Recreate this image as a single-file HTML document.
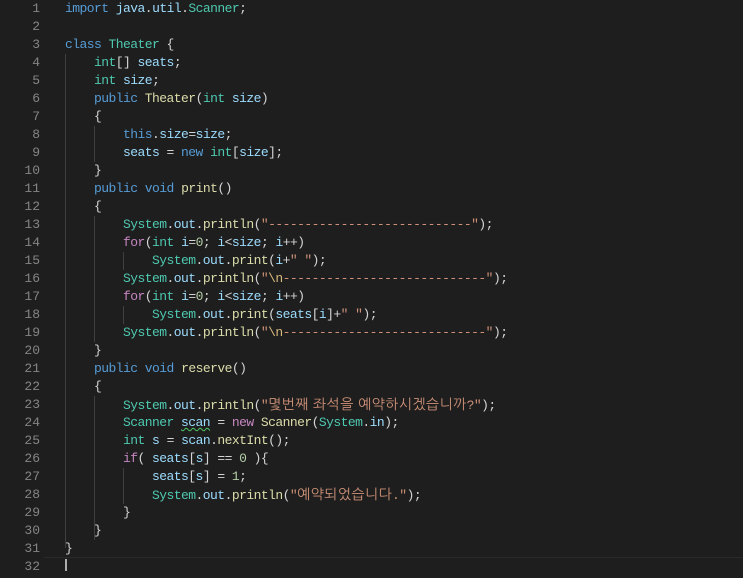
<!DOCTYPE html>
<html><head><meta charset="utf-8"><style>
html,body{margin:0;padding:0;background:#1e1e1e;width:743px;height:567px;overflow:hidden}
.ed{position:absolute;left:0;top:0px;font-family:"Liberation Mono","NanumGothic","Noto Sans CJK KR",monospace;font-size:13px;letter-spacing:-0.55px;line-height:18px;color:#d4d4d4}
.l{position:relative;height:18px;white-space:pre}
.n{position:absolute;left:0;width:40px;text-align:right;color:#858585;letter-spacing:0}
.c{position:absolute;left:65px}
.k{color:#569cd6}.t{color:#4ec9b0}.v{color:#9cdcfe}.f{color:#dcdcaa}.s{color:#ce9178}.m{color:#b5cea8}.p{color:#c586c0}
.ko{font-family:"NanumGothic","Noto Sans CJK KR",sans-serif;font-size:14px;letter-spacing:0.4px}
.g{position:absolute;width:1px;background:#404040}
.sq{text-decoration:underline wavy #4ec966;text-decoration-thickness:1px}
</style></head><body>
<div class="g" style="left:65px;top:54px;height:494px"></div>
<div class="g" style="left:94px;top:126px;height:36px"></div>
<div class="g" style="left:94px;top:216px;height:126px"></div>
<div class="g" style="left:94px;top:396px;height:144px"></div>
<div class="g" style="left:123px;top:252px;height:18px"></div>
<div class="g" style="left:123px;top:306px;height:18px"></div>
<div class="g" style="left:123px;top:468px;height:36px"></div>
<div style="position:absolute;left:44px;top:557px;width:699px;height:20px;border-top:1px solid #2a2a2a"></div>
<div style="position:absolute;left:65px;top:559px;width:2px;height:12px;background:#aeafad"></div>
<div class="ed">
<div class="l"><span class="n">1</span><span class="c"><span class="k">import</span> <span class="v">java</span>.<span class="v">util</span>.<span class="t">Scanner</span>;</span></div>
<div class="l"><span class="n">2</span></div>
<div class="l"><span class="n">3</span><span class="c"><span class="k">class</span> <span class="t">Theater</span> {</span></div>
<div class="l"><span class="n">4</span><span class="c">    <span class="t">int</span>[] <span class="v">seats</span>;</span></div>
<div class="l"><span class="n">5</span><span class="c">    <span class="t">int</span> <span class="v">size</span>;</span></div>
<div class="l"><span class="n">6</span><span class="c">    <span class="k">public</span> <span class="f">Theater</span>(<span class="t">int</span> <span class="v">size</span>)</span></div>
<div class="l"><span class="n">7</span><span class="c">    {</span></div>
<div class="l"><span class="n">8</span><span class="c">        <span class="k">this</span>.<span class="v">size</span>=<span class="v">size</span>;</span></div>
<div class="l"><span class="n">9</span><span class="c">        <span class="v">seats</span> = <span class="k">new</span> <span class="t">int</span>[<span class="v">size</span>];</span></div>
<div class="l"><span class="n">10</span><span class="c">    }</span></div>
<div class="l"><span class="n">11</span><span class="c">    <span class="k">public</span> <span class="k">void</span> <span class="f">print</span>()</span></div>
<div class="l"><span class="n">12</span><span class="c">    {</span></div>
<div class="l"><span class="n">13</span><span class="c">        <span class="t">System</span>.<span class="v">out</span>.<span class="f">println</span>(<span class="s">"----------------------------"</span>);</span></div>
<div class="l"><span class="n">14</span><span class="c">        <span class="p">for</span>(<span class="t">int</span> <span class="v">i</span>=<span class="m">0</span>; <span class="v">i</span>&lt;<span class="v">size</span>; <span class="v">i</span>++)</span></div>
<div class="l"><span class="n">15</span><span class="c">            <span class="t">System</span>.<span class="v">out</span>.<span class="f">print</span>(<span class="v">i</span>+<span class="s">" "</span>);</span></div>
<div class="l"><span class="n">16</span><span class="c">        <span class="t">System</span>.<span class="v">out</span>.<span class="f">println</span>(<span class="s">"<span style="color:#d7ba7d">\n</span>----------------------------"</span>);</span></div>
<div class="l"><span class="n">17</span><span class="c">        <span class="p">for</span>(<span class="t">int</span> <span class="v">i</span>=<span class="m">0</span>; <span class="v">i</span>&lt;<span class="v">size</span>; <span class="v">i</span>++)</span></div>
<div class="l"><span class="n">18</span><span class="c">            <span class="t">System</span>.<span class="v">out</span>.<span class="f">print</span>(<span class="v">seats</span>[<span class="v">i</span>]+<span class="s">" "</span>);</span></div>
<div class="l"><span class="n">19</span><span class="c">        <span class="t">System</span>.<span class="v">out</span>.<span class="f">println</span>(<span class="s">"<span style="color:#d7ba7d">\n</span>----------------------------"</span>);</span></div>
<div class="l"><span class="n">20</span><span class="c">    }</span></div>
<div class="l"><span class="n">21</span><span class="c">    <span class="k">public</span> <span class="k">void</span> <span class="f">reserve</span>()</span></div>
<div class="l"><span class="n">22</span><span class="c">    {</span></div>
<div class="l"><span class="n">23</span><span class="c">        <span class="t">System</span>.<span class="v">out</span>.<span class="f">println</span>(<span class="s">"<span class="ko">몇번째 좌석을 예약하시겠습니까</span>?"</span>);</span></div>
<div class="l"><span class="n">24</span><span class="c">        <span class="t">Scanner</span> <span class="v sq">scan</span> = <span class="p">new</span> <span class="f">Scanner</span>(<span class="t">System</span>.<span class="v">in</span>);</span></div>
<div class="l"><span class="n">25</span><span class="c">        <span class="t">int</span> <span class="v">s</span> = <span class="v">scan</span>.<span class="f">nextInt</span>();</span></div>
<div class="l"><span class="n">26</span><span class="c">        <span class="p">if</span>( <span class="v">seats</span>[<span class="v">s</span>] == <span class="m">0</span> ){</span></div>
<div class="l"><span class="n">27</span><span class="c">            <span class="v">seats</span>[<span class="v">s</span>] = <span class="m">1</span>;</span></div>
<div class="l"><span class="n">28</span><span class="c">            <span class="t">System</span>.<span class="v">out</span>.<span class="f">println</span>(<span class="s">"<span class="ko">예약되었습니다</span>."</span>);</span></div>
<div class="l"><span class="n">29</span><span class="c">        }</span></div>
<div class="l"><span class="n">30</span><span class="c">    }</span></div>
<div class="l"><span class="n">31</span><span class="c">}</span></div>
<div class="l"><span class="n">32</span></div>
</div>
</body></html>
